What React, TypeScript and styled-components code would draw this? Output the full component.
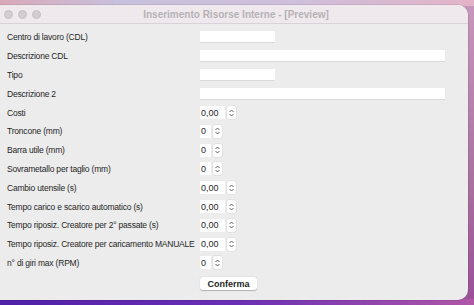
import React from "react";
import styled, { createGlobalStyle } from "styled-components";

const Global = createGlobalStyle`
  html, body { margin: 0; padding: 0; width: 474px; height: 305px; overflow: hidden; }
  body {
    font-family: "Liberation Sans", Arial, sans-serif;
    background: #b47aa8;
  }
`;

const Desktop = styled.div`
  width: 474px;
  height: 305px;
  background:
    linear-gradient(90deg, #d9a9b8 0%, #c8c0dc 25%, #cdbfdc 60%, #e3b3c8 100%) top / 100% 6px no-repeat,
    linear-gradient(90deg, #4f20a8 0%, #6a2fb4 50%, #b057a8 100%) bottom / 100% 6px no-repeat,
    linear-gradient(180deg, #c898bc 0%, #a8719e 60%, #9b4f98 100%);
  padding-top: 5px;
  box-sizing: border-box;
`;

const Window = styled.div`
  width: 468px;
  height: 295px;
  background: #ececec;
  border-radius: 0 10px 10px 0;
  overflow: hidden;
  display: flex;
  flex-direction: column;
  box-shadow: 0 0 0 0.5px rgba(0,0,0,0.15);
`;

const TitleBar = styled.div`
  height: 18px;
  flex: none;
  background: #efe9ed;
  border-bottom: 1px solid #d8d3d6;
  display: flex;
  align-items: center;
  position: relative;
  padding-left: 4px;
  gap: 5px;
`;

const Light = styled.span`
  width: 7px;
  height: 7px;
  border-radius: 50%;
  background: #d2cdd1;
  border: 0.5px solid #c6c1c5;
`;

const Title = styled.div`
  position: absolute;
  inset: 0;
  display: flex;
  align-items: center;
  justify-content: center;
  font-size: 10px;
  font-weight: bold;
  color: #b6b1b5;
  padding-left: 4px;
`;

const Form = styled.div`
  display: grid;
  grid-template-columns: 193px 1fr;
  grid-auto-rows: 18.8px;
  align-items: center;
  padding: 4px 0 0 7px;
`;

const Label = styled.div`
  font-size: 8.5px;
  letter-spacing: -0.2px;
  color: #1f1f1f;
  white-space: nowrap;
`;

const Field = styled.div<{ $w: number }>`
  width: ${(p) => p.$w}px;
  height: 12px;
  background: #ffffff;
  border-bottom: 1px solid #dadada;
  box-sizing: border-box;
`;

const Spin = styled.div`
  display: flex;
  align-items: center;
  gap: 2px;
`;

const SpinBox = styled.div<{ $w: number }>`
  width: ${(p) => p.$w}px;
  height: 13px;
  background: #ffffff;
  font-size: 9px;
  color: #1f1f1f;
  display: flex;
  align-items: center;
  padding-left: 1px;
  box-sizing: border-box;
`;

const Arrows = styled.div`
  width: 9px;
  height: 13px;
  background: #ffffff;
  border-radius: 2px;
  display: flex;
  align-items: center;
  justify-content: center;
  box-shadow: 0 0 0 0.5px #d8d8d8;
`;

const Button = styled.button`
  width: 57px;
  height: 13px;
  padding: 0;
  border: none;
  border-radius: 3px;
  background: #ffffff;
  box-shadow: 0 0.5px 1px rgba(0,0,0,0.25);
  font-family: "Liberation Sans", Arial, sans-serif;
  font-size: 9px;
  font-weight: bold;
  color: #1f1f1f;
`;

const ArrowIcon = () => (
  <svg width="7" height="10" viewBox="0 0 7 10">
    <path d="M1.5 4 L3.5 2 L5.5 4 M1.5 6 L3.5 8 L5.5 6" fill="none" stroke="#555" strokeWidth="0.9" />
  </svg>
);

type Row =
  | { label: string; kind: "text"; w: number }
  | { label: string; kind: "spin"; value: string };

const rows: Row[] = [
  { label: "Centro di lavoro (CDL)", kind: "text", w: 75 },
  { label: "Descrizione CDL", kind: "text", w: 245 },
  { label: "Tipo", kind: "text", w: 75 },
  { label: "Descrizione 2", kind: "text", w: 245 },
  { label: "Costi", kind: "spin", value: "0,00" },
  { label: "Troncone (mm)", kind: "spin", value: "0" },
  { label: "Barra utile (mm)", kind: "spin", value: "0" },
  { label: "Sovrametallo per taglio (mm)", kind: "spin", value: "0" },
  { label: "Cambio utensile (s)", kind: "spin", value: "0,00" },
  { label: "Tempo carico e scarico automatico (s)", kind: "spin", value: "0,00" },
  { label: "Tempo riposiz. Creatore per 2° passate (s)", kind: "spin", value: "0,00" },
  { label: "Tempo riposiz. Creatore per caricamento MANUALE", kind: "spin", value: "0,00" },
  { label: "n° di giri max (RPM)", kind: "spin", value: "0" },
];

export default function App() {
  return (
    <>
      <Global />
      <Desktop>
        <Window>
          <TitleBar>
            <Light />
            <Light />
            <Light />
            <Title>Inserimento Risorse Interne - [Preview]</Title>
          </TitleBar>
          <Form>
            {rows.map((r) => (
              <React.Fragment key={r.label}>
                <Label>{r.label}</Label>
                {r.kind === "text" ? (
                  <Field $w={r.w} />
                ) : (
                  <Spin>
                    <SpinBox $w={r.value.length > 1 ? 25 : 11}>{r.value}</SpinBox>
                    <Arrows>
                      <ArrowIcon />
                    </Arrows>
                  </Spin>
                )}
              </React.Fragment>
            ))}
            <span />
            <div>
              <Button>Conferma</Button>
            </div>
          </Form>
        </Window>
      </Desktop>
    </>
  );
}
